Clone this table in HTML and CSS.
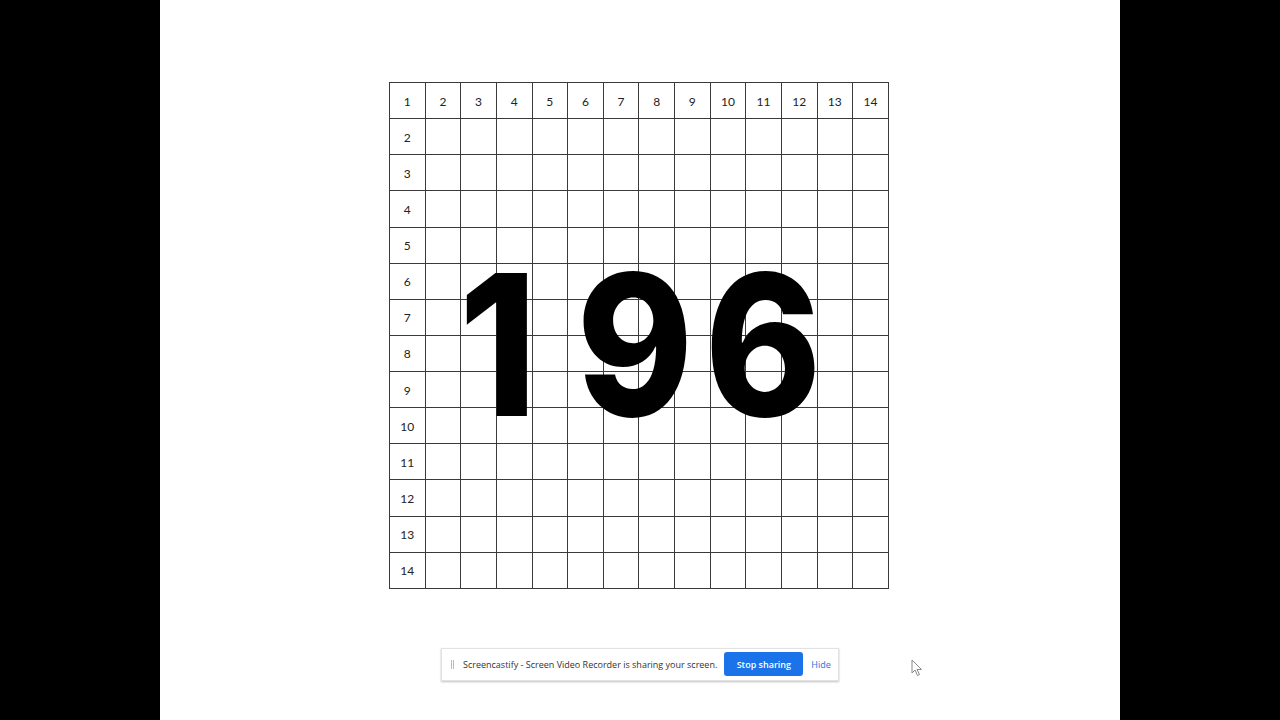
FILE: index.html
```html
<!DOCTYPE html>
<html>
<head>
<meta charset="utf-8">
<link rel="stylesheet" href="styles.css">
</head>
<body>
<div class="page">
  <div class="board">
    <div class="grid" id="grid">
      <div class="c">1</div><div class="c">2</div><div class="c">3</div><div class="c">4</div><div class="c">5</div><div class="c">6</div><div class="c">7</div><div class="c">8</div><div class="c">9</div><div class="c">10</div><div class="c">11</div><div class="c">12</div><div class="c">13</div><div class="c">14</div>
      <div class="c">2</div><div class="c"></div><div class="c"></div><div class="c"></div><div class="c"></div><div class="c"></div><div class="c"></div><div class="c"></div><div class="c"></div><div class="c"></div><div class="c"></div><div class="c"></div><div class="c"></div><div class="c"></div>
      <div class="c">3</div><div class="c"></div><div class="c"></div><div class="c"></div><div class="c"></div><div class="c"></div><div class="c"></div><div class="c"></div><div class="c"></div><div class="c"></div><div class="c"></div><div class="c"></div><div class="c"></div><div class="c"></div>
      <div class="c">4</div><div class="c"></div><div class="c"></div><div class="c"></div><div class="c"></div><div class="c"></div><div class="c"></div><div class="c"></div><div class="c"></div><div class="c"></div><div class="c"></div><div class="c"></div><div class="c"></div><div class="c"></div>
      <div class="c">5</div><div class="c"></div><div class="c"></div><div class="c"></div><div class="c"></div><div class="c"></div><div class="c"></div><div class="c"></div><div class="c"></div><div class="c"></div><div class="c"></div><div class="c"></div><div class="c"></div><div class="c"></div>
      <div class="c">6</div><div class="c"></div><div class="c"></div><div class="c"></div><div class="c"></div><div class="c"></div><div class="c"></div><div class="c"></div><div class="c"></div><div class="c"></div><div class="c"></div><div class="c"></div><div class="c"></div><div class="c"></div>
      <div class="c">7</div><div class="c"></div><div class="c"></div><div class="c"></div><div class="c"></div><div class="c"></div><div class="c"></div><div class="c"></div><div class="c"></div><div class="c"></div><div class="c"></div><div class="c"></div><div class="c"></div><div class="c"></div>
      <div class="c">8</div><div class="c"></div><div class="c"></div><div class="c"></div><div class="c"></div><div class="c"></div><div class="c"></div><div class="c"></div><div class="c"></div><div class="c"></div><div class="c"></div><div class="c"></div><div class="c"></div><div class="c"></div>
      <div class="c">9</div><div class="c"></div><div class="c"></div><div class="c"></div><div class="c"></div><div class="c"></div><div class="c"></div><div class="c"></div><div class="c"></div><div class="c"></div><div class="c"></div><div class="c"></div><div class="c"></div><div class="c"></div>
      <div class="c">10</div><div class="c"></div><div class="c"></div><div class="c"></div><div class="c"></div><div class="c"></div><div class="c"></div><div class="c"></div><div class="c"></div><div class="c"></div><div class="c"></div><div class="c"></div><div class="c"></div><div class="c"></div>
      <div class="c">11</div><div class="c"></div><div class="c"></div><div class="c"></div><div class="c"></div><div class="c"></div><div class="c"></div><div class="c"></div><div class="c"></div><div class="c"></div><div class="c"></div><div class="c"></div><div class="c"></div><div class="c"></div>
      <div class="c">12</div><div class="c"></div><div class="c"></div><div class="c"></div><div class="c"></div><div class="c"></div><div class="c"></div><div class="c"></div><div class="c"></div><div class="c"></div><div class="c"></div><div class="c"></div><div class="c"></div><div class="c"></div>
      <div class="c">13</div><div class="c"></div><div class="c"></div><div class="c"></div><div class="c"></div><div class="c"></div><div class="c"></div><div class="c"></div><div class="c"></div><div class="c"></div><div class="c"></div><div class="c"></div><div class="c"></div><div class="c"></div>
      <div class="c">14</div><div class="c"></div><div class="c"></div><div class="c"></div><div class="c"></div><div class="c"></div><div class="c"></div><div class="c"></div><div class="c"></div><div class="c"></div><div class="c"></div><div class="c"></div><div class="c"></div><div class="c"></div>
    </div>
    <div class="big"><span class="one">1</span>96</div>
  </div>
  <div class="share">
    <span class="grip"></span>
    <span class="msg">Screencastify - Screen Video Recorder is sharing your screen.</span>
    <span class="stop">Stop sharing</span>
    <span class="hide">Hide</span>
  </div>
  <svg class="cursor" width="12" height="18" viewBox="0 0 12 18"><path d="M1 1 L1 14 L4 11 L6.5 16.5 L8.5 15.5 L6 10.5 L10.5 10.5 Z" fill="#fff" stroke="#888" stroke-width="1"/></svg>
</div>
</body>
</html>
```
FILE: styles.css
```css
html, body {
  margin: 0;
  padding: 0;
  background: #000;
  height: 720px;
  overflow: hidden;
}
.page {
  position: relative;
  width: 960px;
  height: 720px;
  margin-left: 160px;
  background: #fff;
  display: flex;
  flex-direction: column;
  align-items: flex-start;
}
.board {
  position: relative;
  margin-top: 82px;
  margin-left: 229px;
}
.grid {
  display: grid;
  grid-template-columns: repeat(14, 34.64px);
  grid-template-rows: repeat(14, 35.14px);
  gap: 1px;
  padding: 1px;
  background: #3a3a3a;
}
.c {
  background: #fff;
  display: flex;
  align-items: center;
  justify-content: center;
  font-family: Lato, "Liberation Sans", sans-serif;
  font-size: 12px;
  color: #222;
  padding-top: 1px;
}
.big {
  position: absolute;
  left: 70px;
  top: 165px;
  white-space: nowrap;
  font-family: Inter, "Liberation Sans", sans-serif;
  font-weight: 800;
  font-size: 196px;
  line-height: 1;
  letter-spacing: 13px;
  color: #000;
  transform: scaleX(0.9);
  transform-origin: left top;
}
.one {
  margin-right: 31px;
}
.share {
  margin-top: 59px;
  margin-left: 281px;
  width: 398px;
  height: 33px;
  box-sizing: border-box;
  background: #fff;
  border: 1px solid #e2e2e2;
  box-shadow: 0 1px 2px rgba(0,0,0,0.25);
  display: flex;
  align-items: center;
  padding-left: 9px;
  font-family: "Open Sans", "Noto Sans", sans-serif;
  font-size: 9px;
}
.grip {
  width: 3px;
  height: 9px;
  border-left: 1px solid #bbb;
  border-right: 1px solid #bbb;
  box-sizing: border-box;
  margin-right: 9px;
}
.msg {
  color: #333;
}
.stop {
  margin-left: 7px;
  background: #1a73e8;
  color: #fff;
  font-weight: 600;
  width: 79px;
  height: 24px;
  border-radius: 3px;
  display: flex;
  align-items: center;
  justify-content: center;
}
.hide {
  margin-left: 8px;
  color: #1a73e8;
}
.cursor {
  position: absolute;
  left: 751px;
  top: 659px;
}
```
